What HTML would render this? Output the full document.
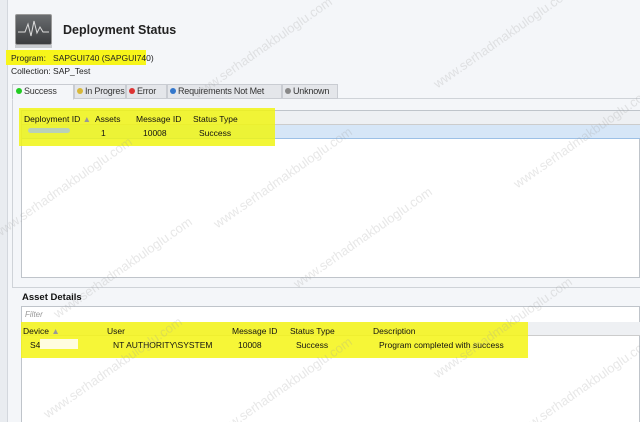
<!DOCTYPE html>
<html><head><style>
*{margin:0;padding:0;box-sizing:border-box}
html,body{width:640px;height:422px;overflow:hidden}
body{background:#f4f6f9;font-family:"Liberation Sans",sans-serif;font-size:8.5px;color:#111;position:relative}
.a{position:absolute;white-space:nowrap}
.wm{position:absolute;color:rgba(160,160,160,.25);font-size:13px;transform:rotate(-35deg);white-space:nowrap}
.tab{position:absolute;top:84px;height:15px;border:1px solid #c9ccd2;background:#e4e6ea;font-size:9px;padding:1px 1px 0 2px;color:#333;white-space:nowrap;overflow:hidden;letter-spacing:-0.2px}
.dot{display:inline-block;width:6px;height:6px;border-radius:50%;margin-right:2px;vertical-align:0}
</style></head><body>
<div class="a" style="left:0;top:0;width:8px;height:422px;background:#e9ecf0;border-right:1px solid #d3d7dd"></div>
<div class="a" style="left:15px;top:14px;width:37px;height:31px;background:linear-gradient(#6a6d70,#3a3c3e);border:1px solid #999;border-radius:2px"></div>
<svg class="a" style="left:17px;top:18px" width="33" height="22"><polyline points="1,14 8,14 11,6 14,18 17,3 20,15 23,9 26,14 32,14" fill="none" stroke="#ddd" stroke-width="1"/></svg>
<div class="a" style="left:15px;top:45px;width:37px;height:3px;background:#c9ccd0"></div>
<div class="a" style="left:63px;top:23px;font-size:12.5px;font-weight:bold;color:#222">Deployment Status</div>
<div class="a" style="left:6px;top:50px;width:140px;height:15px;background:#f7f51a"></div>
<div class="a" style="left:11px;top:53px;color:#222">Program:&nbsp;&nbsp; SAPGUI740 (SAPGUI740)</div>
<div class="a" style="left:11px;top:66px;color:#222">Collection: SAP_Test</div>

<div class="a" style="left:12px;top:98px;width:630px;height:190px;background:#f4f6f9;border:1px solid #cfd3d8"></div>
<div class="tab" style="left:12px;width:62px;background:#f4f6f9;border-bottom-color:#f4f6f9;height:16px;padding-left:3px"><span class="dot" style="background:#2c2"></span>Success</div>
<div class="tab" style="left:74px;width:52px"><span class="dot" style="background:#d8b83a"></span>In Progress</div>
<div class="tab" style="left:126px;width:41px"><span class="dot" style="background:#d33"></span>Error</div>
<div class="tab" style="left:167px;width:115px"><span class="dot" style="background:#37c"></span>Requirements Not Met</div>
<div class="tab" style="left:282px;width:56px"><span class="dot" style="background:#888"></span>Unknown</div>

<div class="a" style="left:21px;top:110px;width:619px;height:168px;background:#fff;border:1px solid #bfc4ca"></div>
<div class="a" style="left:22px;top:111px;width:618px;height:14px;background:#eef0f3;border-bottom:1px solid #ccc"></div>
<div class="a" style="left:22px;top:125px;width:618px;height:14px;background:#d6e6f7;border-bottom:1px solid #9cc0e6"></div>
<div class="a" style="left:19px;top:108px;width:256px;height:38px;background:rgba(240,245,20,.85)"></div>
<div class="a" style="left:24px;top:114px">Deployment ID <span style="color:#999">▲</span></div>
<div class="a" style="left:95px;top:114px">Assets</div>
<div class="a" style="left:136px;top:114px">Message ID</div>
<div class="a" style="left:193px;top:114px">Status Type</div>
<div class="a" style="left:28px;top:128px;width:42px;height:5px;background:#b9d0b8;border-radius:3px"></div>
<div class="a" style="left:101px;top:128px">1</div>
<div class="a" style="left:143px;top:128px">10008</div>
<div class="a" style="left:199px;top:128px">Success</div>

<div class="a" style="left:22px;top:292px;font-weight:bold;font-size:9.5px">Asset Details</div>
<div class="a" style="left:21px;top:306px;width:619px;height:120px;background:#fff;border:1px solid #bfc4ca"></div>
<div class="a" style="left:25px;top:310px;color:#999;font-style:italic;font-size:8px">Filter</div>
<div class="a" style="left:22px;top:322px;width:618px;height:14px;background:#eef0f3;border-bottom:1px solid #ccc"></div>
<div class="a" style="left:21px;top:322px;width:507px;height:36px;background:rgba(245,245,20,.85)"></div>
<div class="a" style="left:23px;top:326px">Device <span style="color:#999">▲</span></div>
<div class="a" style="left:107px;top:326px">User</div>
<div class="a" style="left:232px;top:326px">Message ID</div>
<div class="a" style="left:290px;top:326px">Status Type</div>
<div class="a" style="left:373px;top:326px">Description</div>
<div class="a" style="left:30px;top:340px">S4</div>
<div class="a" style="left:40px;top:339px;width:38px;height:10px;background:#fffde0"></div>
<div class="a" style="left:113px;top:340px">NT AUTHORITY\SYSTEM</div>
<div class="a" style="left:238px;top:340px">10008</div>
<div class="a" style="left:296px;top:340px">Success</div>
<div class="a" style="left:379px;top:340px">Program completed with success</div>

<div class="wm" style="left:180px;top:40px">www.serhadmakbuloglu.com</div>
<div class="wm" style="left:420px;top:30px">www.serhadmakbuloglu.com</div>
<div class="wm" style="left:-20px;top:180px">www.serhadmakbuloglu.com</div>
<div class="wm" style="left:200px;top:170px">www.serhadmakbuloglu.com</div>
<div class="wm" style="left:500px;top:130px">www.serhadmakbuloglu.com</div>
<div class="wm" style="left:40px;top:260px">www.serhadmakbuloglu.com</div>
<div class="wm" style="left:280px;top:230px">www.serhadmakbuloglu.com</div>
<div class="wm" style="left:420px;top:320px">www.serhadmakbuloglu.com</div>
<div class="wm" style="left:30px;top:360px">www.serhadmakbuloglu.com</div>
<div class="wm" style="left:200px;top:380px">www.serhadmakbuloglu.com</div>
<div class="wm" style="left:500px;top:380px">www.serhadmakbuloglu.com</div>
</body></html>
